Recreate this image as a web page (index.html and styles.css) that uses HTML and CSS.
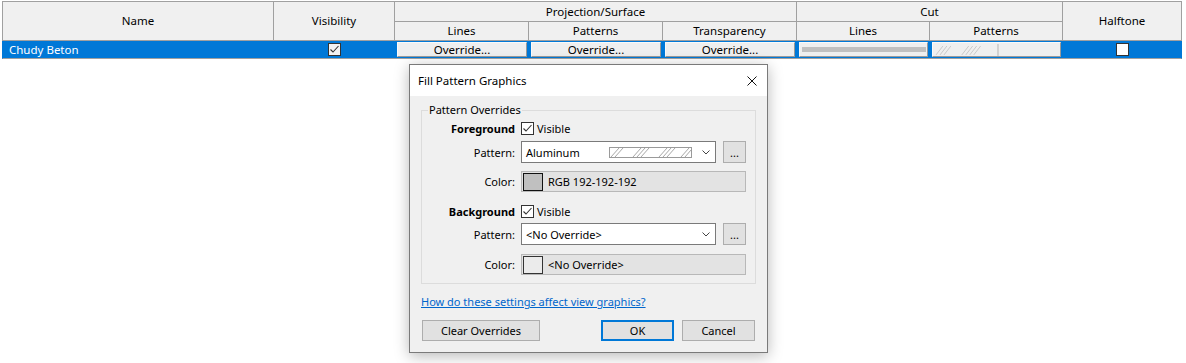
FILE: index.html
```html
<!DOCTYPE html>
<html>
<head>
<meta charset="utf-8">
<title>Visibility/Graphic Overrides</title>
<link rel="stylesheet" href="styles.css">
</head>
<body>
<div class="sheet">
  <div class="thead">
    <div class="th th-tall c1">Name</div>
    <div class="th th-tall c2">Visibility</div>
    <div class="th th-proj">Projection/Surface</div>
    <div class="th th-cut">Cut</div>
    <div class="th th-tall c8">Halftone</div>
    <div class="th r2 c3">Lines</div>
    <div class="th r2 c4">Patterns</div>
    <div class="th r2 c5">Transparency</div>
    <div class="th r2 c6">Lines</div>
    <div class="th r2 c7">Patterns</div>
  </div>
  <div class="trow">
    <div class="td td-name">Chudy Beton</div>
    <div class="td td-center"><span class="cb cb-soft"><svg width="11" height="11" viewBox="0 0 11 11"><polyline points="1.5,5.5 4,8 9.5,2" fill="none" stroke="#333" stroke-width="1.1"/></svg></span></div>
    <div class="td"><span class="ovr">Override...</span></div>
    <div class="td"><span class="ovr">Override...</span></div>
    <div class="td"><span class="ovr">Override...</span></div>
    <div class="td"><span class="ovr ovr-line"><span class="bar"></span></span></div>
    <div class="td"><span class="ovr ovr-pat"><svg width="127" height="13" viewBox="0 0 127 13"><g stroke="#c8c8c8" stroke-width="1"><line x1="2" y1="12" x2="9" y2="3"/><line x1="6" y1="12" x2="13" y2="3"/><line x1="10" y1="12" x2="17" y2="3"/><line x1="28" y1="12" x2="35" y2="3"/><line x1="32" y1="12" x2="39" y2="3"/><line x1="36" y1="12" x2="43" y2="3"/><line x1="40" y1="12" x2="47" y2="3"/></g><line x1="64.5" y1="1" x2="64.5" y2="13" stroke="#b4b4b4"/></svg></span></div>
    <div class="td td-center"><span class="cb"></span></div>
  </div>
</div>

<div class="dialog">
  <div class="dlg-title">
    <span>Fill Pattern Graphics</span>
    <svg class="close" width="10" height="10" viewBox="0 0 10 10"><path d="M0.5 0.5 L9.5 9.5 M9.5 0.5 L0.5 9.5" stroke="#111" stroke-width="1" fill="none"/></svg>
  </div>
  <div class="dlg-body">
    <div class="group">
      <span class="group-label">Pattern Overrides</span>
      <div class="frow hdr">
        <span class="flabel bold">Foreground</span>
        <span class="chk"><span class="cb"><svg width="11" height="11" viewBox="0 0 11 11"><polyline points="1.5,5.5 4,8 9.5,2" fill="none" stroke="#333" stroke-width="1.1"/></svg></span><span>Visible</span></span>
      </div>
      <div class="frow pat">
        <span class="flabel">Pattern:</span>
        <span class="combo">
          <span class="combo-text">Aluminum</span>
          <svg class="preview" width="83" height="11" viewBox="0 0 83 11"><rect x="0.5" y="0.5" width="82" height="10" fill="#fff" stroke="#9a9a9a"/><g stroke="#a8a8a8" stroke-width="1"><line x1="2" y1="10" x2="10" y2="1"/><line x1="6" y1="10" x2="14" y2="1"/><line x1="24" y1="10" x2="32" y2="1"/><line x1="28" y1="10" x2="36" y2="1"/><line x1="32" y1="10" x2="40" y2="1"/><line x1="50" y1="10" x2="58" y2="1"/><line x1="54" y1="10" x2="62" y2="1"/><line x1="58" y1="10" x2="66" y2="1"/><line x1="72" y1="10" x2="80" y2="1"/><line x1="76" y1="10" x2="82" y2="3"/></g></svg>
          <svg class="chev" width="8" height="5" viewBox="0 0 8 5"><polyline points="0.5,0.5 4,4 7.5,0.5" fill="none" stroke="#444" stroke-width="1"/></svg>
        </span>
        <span class="dots">...</span>
      </div>
      <div class="frow col">
        <span class="flabel">Color:</span>
        <span class="colorf"><span class="swatch"></span><span class="ctext">RGB 192-192-192</span></span>
      </div>
      <div class="frow hdr hdr2">
        <span class="flabel bold">Background</span>
        <span class="chk"><span class="cb"><svg width="11" height="11" viewBox="0 0 11 11"><polyline points="1.5,5.5 4,8 9.5,2" fill="none" stroke="#333" stroke-width="1.1"/></svg></span><span>Visible</span></span>
      </div>
      <div class="frow pat pat2">
        <span class="flabel">Pattern:</span>
        <span class="combo">
          <span class="combo-text">&lt;No Override&gt;</span>
          <svg class="chev" width="8" height="5" viewBox="0 0 8 5"><polyline points="0.5,0.5 4,4 7.5,0.5" fill="none" stroke="#444" stroke-width="1"/></svg>
        </span>
        <span class="dots">...</span>
      </div>
      <div class="frow col col2">
        <span class="flabel">Color:</span>
        <span class="colorf"><span class="swatch swatch-none"></span><span class="ctext">&lt;No Override&gt;</span></span>
      </div>
    </div>
    <a class="help" href="#">How do these settings affect view graphics?</a>
    <div class="btnrow">
      <span class="btn btn-clear">Clear Overrides</span>
      <span class="btn btn-ok">OK</span>
      <span class="btn btn-cancel">Cancel</span>
    </div>
  </div>
</div>
</body>
</html>
```

FILE: styles.css
```css
* { box-sizing: border-box; }
html, body { margin: 0; padding: 0; }
body {
  width: 1186px;
  height: 363px;
  background: #fff;
  font-family: "Noto Sans", "Segoe UI", sans-serif;
  font-size: 11px;
  color: #000;
  position: relative;
  overflow: hidden;
}

/* ---------- table ---------- */
.sheet { margin: 1px 0 0 2px; width: 1180px; }
.thead {
  display: grid;
  grid-template-columns: 270px 120px 133px 133px 133px 132px 132px 118px;
  grid-template-rows: 19px 18px;
  gap: 1px;
  background: #a0a0a0;
  border: 1px solid #a0a0a0;
}
.th {
  background: #f0f0f0;
  display: flex;
  align-items: center;
  justify-content: center;
  line-height: 1;
  white-space: nowrap;
  font-size: 11.5px;
}
.th-tall { grid-row: 1 / span 2; }
.c1 { grid-column: 1; }
.c2 { grid-column: 2; }
.c3 { grid-column: 3; }
.c4 { grid-column: 4; }
.c5 { grid-column: 5; }
.c6 { grid-column: 6; }
.c7 { grid-column: 7; }
.c8 { grid-column: 8; }
.r2 { grid-row: 2; }
.th-proj { grid-column: 3 / span 3; grid-row: 1; }
.th-cut { grid-column: 6 / span 2; grid-row: 1; }

.trow {
  display: grid;
  grid-template-columns: 270px 120px 133px 133px 133px 132px 132px 118px;
  height: 18px;
  gap: 1px;
  background: #0078d7;
  border-left: 1px solid #0078d7;
  border-right: 1px solid #0078d7;
  border-bottom: 1px solid #a0a0a0;
}
.td {
  display: flex;
  align-items: center;
  padding: 1px 1px 1px 2px;
  min-width: 0;
  font-size: 11.5px;
}
.td-name { color: #fff; padding-left: 6px; }
.td-center { justify-content: center; }

.ovr {
  width: 100%;
  height: 15px;
  background: #efefef;
  border: 1px solid;
  border-color: #fafafa #9a9a9a #9a9a9a #fafafa;
  display: flex;
  align-items: center;
  justify-content: center;
  line-height: 1;
  color: #000;
}
.ovr-line { justify-content: flex-start; padding-left: 2px; }
.bar { display: block; width: 124px; height: 5px; background: #c0c0c0; }
.ovr-pat { justify-content: flex-start; padding-left: 1px; overflow: hidden; }

.cb {
  width: 13px;
  height: 13px;
  border: 1px solid #333;
  background: #fff;
  display: inline-flex;
  align-items: center;
  justify-content: center;
  flex: none;
}
.cb-soft { background: #f2f2f2; }

/* ---------- dialog ---------- */
.dialog {
  position: absolute;
  left: 409px;
  top: 64px;
  width: 359px;
  border: 1px solid #7a7a7a;
  background: #f0f0f0;
  box-shadow: 0 3px 14px rgba(0, 0, 0, 0.28);
}
.dlg-title {
  height: 31px;
  background: #fff;
  display: flex;
  align-items: center;
  justify-content: space-between;
  padding: 0 10px 0 8px;
  font-size: 11.5px;
}
.dlg-body { padding: 14px 11px 11px; }

.group {
  position: relative;
  border: 1px solid #dcdcdc;
  padding: 9px 8px 8px 0;
}
.group-label {
  position: absolute;
  left: 6px;
  top: -9px;
  padding: 0 1px;
  background: #f0f0f0;
  line-height: 16px;
}

.frow { display: flex; align-items: center; gap: 6px; }
.flabel { width: 93px; flex: none; text-align: right; white-space: nowrap; }
.bold { font-weight: 700; }
.hdr { height: 16px; }
.pat { height: 22px; margin-top: 5px; }
.col { height: 21px; margin-top: 8px; }
.hdr2 { margin-top: 11px; }
.pat2 { margin-top: 4px; }
.col2 { margin-top: 9px; }

.chk { display: flex; align-items: center; gap: 3px; }

.combo {
  width: 195px;
  height: 22px;
  background: #fff;
  border: 1px solid #7a7a7a;
  display: flex;
  align-items: center;
  padding: 0 5px 0 4px;
}
.combo-text { flex: 1; white-space: nowrap; }
.preview { display: block; flex: none; }
.chev { display: block; flex: none; margin-left: 10px; }

.dots {
  width: 23px;
  height: 22px;
  margin-left: 1px;
  background: #e1e1e1;
  border: 1px solid #adadad;
  display: flex;
  align-items: flex-end;
  justify-content: center;
  padding-bottom: 4px;
  line-height: 1;
}

.colorf {
  width: 225px;
  height: 21px;
  background: #e3e3e3;
  border: 1px solid #b8b8b8;
  display: flex;
  align-items: center;
}
.swatch {
  width: 20px;
  height: 18px;
  margin-left: 1px;
  border: 1px solid #111;
  background: #c0c0c0;
  flex: none;
}
.swatch-none { background: #ebebeb; border-color: #333; }
.ctext { margin-left: 5px; white-space: nowrap; }

.help {
  display: block;
  margin-top: 10px;
  line-height: 16px;
  color: #0066cc;
  text-decoration: underline;
  white-space: nowrap;
}

.btnrow { display: flex; margin-top: 10px; padding: 0 1px; }
.btn {
  height: 21px;
  background: #e1e1e1;
  border: 1px solid #adadad;
  display: flex;
  align-items: center;
  justify-content: center;
  line-height: 1;
}
.btn-clear { width: 118px; }
.btn-ok { width: 73px; margin-left: auto; border: 2px solid #0078d7; }
.btn-cancel { width: 73px; margin-left: 8px; }
```
